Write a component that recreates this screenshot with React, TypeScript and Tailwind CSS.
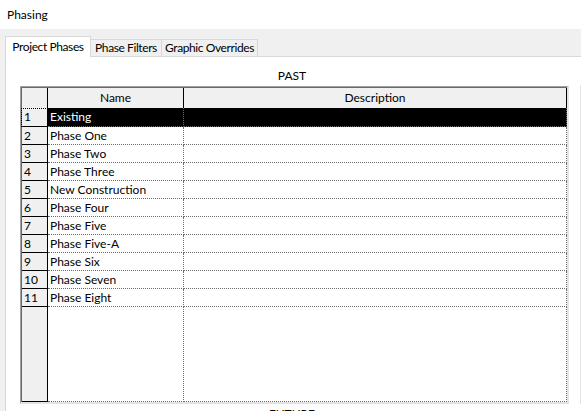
import React from "react";

const rows = [
  "Existing",
  "Phase One",
  "Phase Two",
  "Phase Three",
  "New Construction",
  "Phase Four",
  "Phase Five",
  "Phase Five-A",
  "Phase Six",
  "Phase Seven",
  "Phase Eight",
];

export default function App() {
  return (
    <div className="w-[581px] h-[411px] overflow-hidden bg-white flex flex-col font-['Lato',_sans-serif] text-[12px] text-black leading-none">
      <div className="h-[29px] shrink-0 flex items-center pl-[7px]">Phasing</div>
      <div className="flex-1 min-h-0 bg-[#f0f0f0] pl-[5px] flex flex-col">
        <div className="h-[27px] shrink-0 flex items-end whitespace-nowrap tracking-[-0.4px]">
          <div className="relative z-10 mb-[-1px] h-[21px] w-[86px] bg-white border border-b-0 border-[#d9d9d9] flex items-center justify-center">
            Project Phases
          </div>
          <div className="h-[17px] w-[71px] border-t border-r border-[#d9d9d9] flex items-center justify-center">
            Phase Filters
          </div>
          <div className="h-[17px] w-[96px] border-t border-r border-[#d9d9d9] flex items-center justify-center">
            Graphic Overrides
          </div>
        </div>
        <div className="flex-1 min-h-0 bg-white border-t border-l border-[#d9d9d9] flex flex-col">
          <div className="h-[29px] shrink-0 flex items-end pb-[4px]">
            <div className="ml-[14px] w-[549px] pr-[5px] text-center">PAST</div>
          </div>
          <div className="flex">
            <div className="ml-[14px] w-[549px] h-[318px] border-t border-l border-[#a0a0a0] border-r-2 border-b-2 border-r-[#e3e3e3] border-b-[#e3e3e3] flex flex-col">
              <div className="flex-1 border-t border-l border-[#696969] flex flex-col">
                <div className="h-[20px] shrink-0 flex bg-[#f0f0f0]">
                  <div className="w-[26px] border-r border-black" />
                  <div className="w-[136px] border-r border-black flex items-center justify-center">Name</div>
                  <div className="flex-1 border-r border-black flex items-center justify-center">Description</div>
                </div>
                {rows.map((name, i) => {
                  const sel = i === 0;
                  return (
                    <div key={name} className={`flex shrink-0 ${sel ? "h-[19px]" : "h-[18px]"}`}>
                      <div className="relative w-[26px] bg-[#f0f0f0] border-r border-b border-black pl-[2px] flex items-center">
                        {i + 1}
                        {sel && (
                          <div className="absolute top-0 bottom-[-1px] left-[-1px] right-[-1px] border border-dotted border-black" />
                        )}
                      </div>
                      <div
                        className={`w-[136px] border-r border-b border-dotted border-[#6d6d6d] pl-[2px] flex items-center ${
                          sel ? "bg-black text-white" : ""
                        }`}
                      >
                        {name}
                      </div>
                      <div
                        className={`flex-1 border-r border-b border-dotted border-[#6d6d6d] ${sel ? "bg-black" : ""}`}
                      />
                    </div>
                  );
                })}
                <div className="flex-1 flex">
                  <div className="w-[26px] bg-[#f0f0f0] border-r border-b border-black" />
                  <div className="w-[136px] border-r border-b border-dotted border-[#6d6d6d]" />
                  <div className="flex-1 border-r border-b border-dotted border-[#6d6d6d]" />
                </div>
              </div>
            </div>
            <div className="flex-1" />
            <div className="w-[1px] mt-[-1px] bg-[#e3e3e3]" />
          </div>
          <div className="mt-[4px] ml-[14px] w-[549px] pr-[5px] text-center">FUTURE</div>
        </div>
      </div>
    </div>
  );
}
